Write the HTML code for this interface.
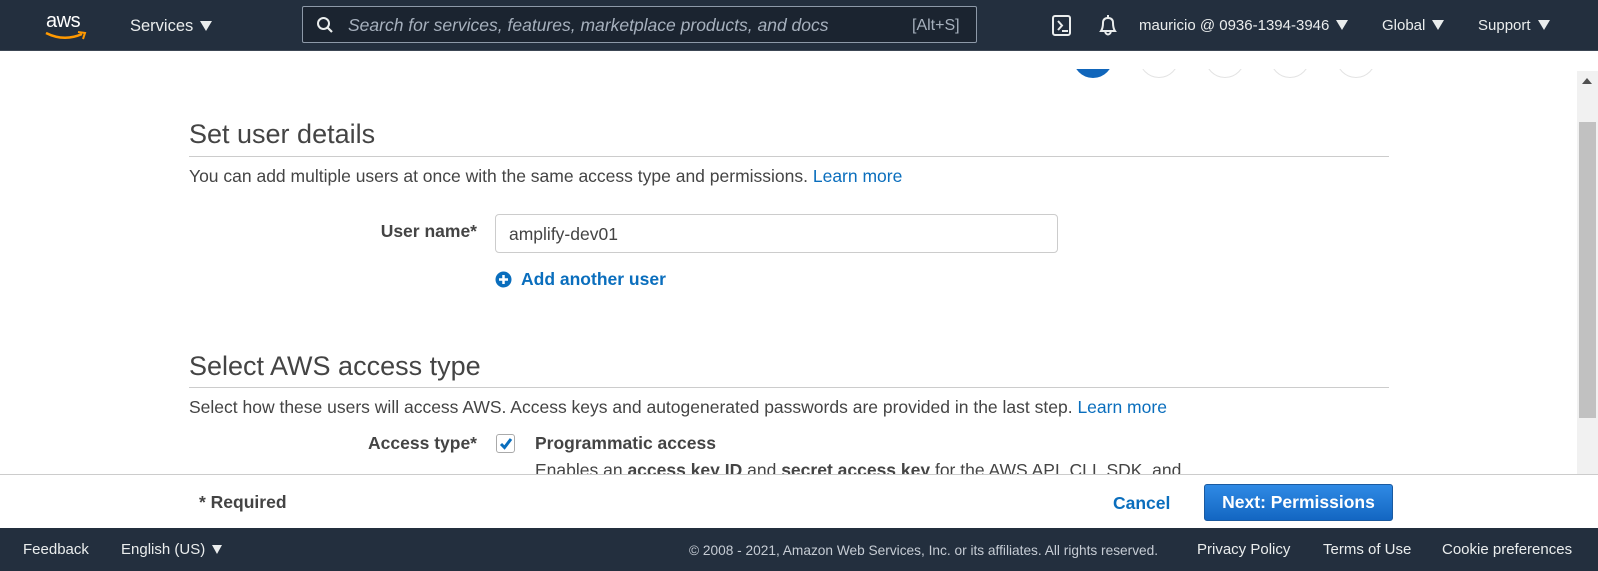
<!DOCTYPE html>
<html><head><style>
*{margin:0;padding:0;box-sizing:border-box}
body{width:1598px;height:571px;overflow:hidden;background:#fff;font-family:"Liberation Sans",Arial,sans-serif;color:#444;position:relative}
.abs{position:absolute;white-space:nowrap}
#hdr{position:absolute;left:0;top:0;width:1598px;height:51px;background:#232f3e;border-bottom:1px solid #3c4654;z-index:5}
.ht{color:#eaeded;font-size:15px;position:absolute;top:17px;white-space:nowrap}
.tri{display:inline-block;width:0;height:0;border-left:6px solid transparent;border-right:6px solid transparent;border-top:10px solid #eaeded;margin-left:7px;vertical-align:0}
.circ{position:absolute;width:40px;height:40px;border-radius:50%;border:1px solid #e3e3e3;top:38px;background:#fff}
h2{font-weight:normal;font-size:27px;color:#444;position:absolute}
.line{position:absolute;left:189px;width:1200px;height:1px;background:#ccc}
.lnk{color:#0a6ebd}
.b{font-size:17.5px}
#foot{position:absolute;left:0;top:528px;width:1598px;height:43px;background:#232f3e}
.ft{position:absolute;top:13px;color:#eaeded;font-size:15px;white-space:nowrap}
</style></head><body>
<div id="hdr">
 <div class="abs" style="left:46px;top:10px;color:#fff;font-size:20px;letter-spacing:-0.5px">aws</div>
 <svg class="abs" style="left:44px;top:30px" width="46" height="12"><path d="M2 3 Q20 12 38 4" stroke="#f90" stroke-width="2.5" fill="none"/><path d="M34 2 L41 3 L39 9" stroke="#f90" stroke-width="2" fill="none"/></svg>
 <div class="ht" style="left:130px;font-size:16.5px">Services<span class="tri"></span></div>
 <div class="abs" style="left:302px;top:6px;width:675px;height:37px;background:#1b2430;border:1px solid #8d99a8;border-radius:2px"></div>
 <svg class="abs" style="left:316px;top:16px" width="18" height="18"><circle cx="7.5" cy="7.5" r="5.5" stroke="#eaeded" stroke-width="2" fill="none"/><path d="M11.5 11.5 L16 16" stroke="#eaeded" stroke-width="2.2"/></svg>
 <div class="ht" style="left:348px;font-style:italic;color:#a6b0bd;font-size:17.5px;top:15px">Search for services, features, marketplace products, and docs</div>
 <div class="ht" style="left:912px;color:#a6b0bd;font-size:16px">[Alt+S]</div>
 <svg class="abs" style="left:1052px;top:15px" width="20" height="22"><rect x="1" y="1" width="17" height="19" rx="2" stroke="#eaeded" stroke-width="2" fill="none"/><path d="M6 6 L10 10.5 L6 15 M10 16 H16" stroke="#eaeded" stroke-width="2" fill="none"/></svg>
 <svg class="abs" style="left:1097px;top:14px" width="22" height="24"><path d="M4 17 Q6 14 6 9 Q6 4 11 4 Q16 4 16 9 Q16 14 18 17 Z" stroke="#eaeded" stroke-width="2" fill="none"/><path d="M8 18 Q11 23 14 18" stroke="#eaeded" stroke-width="2" fill="none"/><path d="M11 1 V4" stroke="#eaeded" stroke-width="2"/></svg>
 <div class="ht" style="left:1139px">mauricio @ 0936-1394-3946<span class="tri"></span></div>
 <div class="ht" style="left:1382px">Global<span class="tri"></span></div>
 <div class="ht" style="left:1478px">Support<span class="tri"></span></div>
</div>
<div class="circ" style="left:1073px;background:#1166bb;border-color:#1166bb"></div>
<div class="circ" style="left:1139px"></div>
<div class="circ" style="left:1205px"></div>
<div class="circ" style="left:1270px"></div>
<div class="circ" style="left:1336px"></div>
<div style="position:absolute;left:0;top:51px;width:1575px;height:18px;background:#fff;z-index:2"></div>

<h2 style="left:189px;top:119px">Set user details</h2>
<div class="line" style="top:156px"></div>
<div class="abs b" style="left:189px;top:166px">You can add multiple users at once with the same access type and permissions. <span class="lnk">Learn more</span></div>
<div class="abs b" style="left:360px;top:221px;width:117px;text-align:right;font-weight:bold">User name*</div>
<div class="abs b" style="left:495px;top:214px;width:563px;height:39px;border:1px solid #ccc;border-radius:4px;padding:9px 0 0 13px">amplify-dev01</div>
<svg class="abs" style="left:495px;top:271px" width="17" height="17"><circle cx="8.5" cy="8.5" r="8" fill="#0a6ebd"/><path d="M8.5 4 V13 M4 8.5 H13" stroke="#fff" stroke-width="2.5"/></svg>
<div class="abs lnk b" style="left:521px;top:269px;font-weight:bold">Add another user</div>

<h2 style="left:189px;top:351px">Select AWS access type</h2>
<div class="line" style="top:387px"></div>
<div class="abs b" style="left:189px;top:397px">Select how these users will access AWS. Access keys and autogenerated passwords are provided in the last step. <span class="lnk">Learn more</span></div>
<div class="abs b" style="left:340px;top:433px;width:137px;text-align:right;font-weight:bold">Access type*</div>
<div class="abs" style="left:496px;top:434px;width:19px;height:19px;border:1px solid #aaa;border-radius:3px"></div>
<svg class="abs" style="left:499px;top:437px" width="14" height="13"><path d="M2 7 L5.5 10.5 L12 2" stroke="#0a6ebd" stroke-width="3" fill="none"/></svg>
<div class="abs b" style="left:535px;top:433px;font-weight:bold">Programmatic access</div>
<div class="abs b" style="left:535px;top:460px;height:14px;overflow:hidden">Enables an <b>access key ID</b> and <b>secret access key</b> for the AWS API, CLI, SDK, and</div>

<div class="abs" style="left:1577px;top:71px;width:21px;height:403px;background:#f1f1f1;z-index:3"></div>
<div class="abs" style="left:1579px;top:122px;width:17px;height:296px;background:#c1c1c1;z-index:3"></div>
<svg class="abs" style="left:1582px;top:78px;z-index:3" width="10" height="6"><path d="M0 6 L5 0 L10 6Z" fill="#505050"/></svg>

<div class="abs" style="left:0;top:474px;width:1598px;height:54px;background:#fff;border-top:1px solid #ccc"></div>
<div class="abs b" style="left:199px;top:492px;font-weight:bold;color:#444">* Required</div>
<div class="abs lnk b" style="left:1113px;top:493px;font-weight:bold">Cancel</div>
<div class="abs b" style="left:1204px;top:484px;width:189px;height:37px;background:linear-gradient(#2f8ae5,#1366c2);border:1px solid #1a5aa0;border-radius:3px;color:#fff;font-weight:bold;text-align:center;line-height:35px">Next: Permissions</div>

<div id="foot">
 <div class="ft" style="left:23px">Feedback</div>
 <div class="ft" style="left:121px">English (US)<span class="tri" style="border-top-width:9px;border-left-width:5px;border-right-width:5px"></span></div>
 <div class="ft" style="left:689px;font-size:13.7px;top:15px;color:#c6ccd4">© 2008 - 2021, Amazon Web Services, Inc. or its affiliates. All rights reserved.</div>
 <div class="ft" style="left:1197px">Privacy Policy</div>
 <div class="ft" style="left:1323px">Terms of Use</div>
 <div class="ft" style="left:1442px">Cookie preferences</div>
</div>
</body></html>
